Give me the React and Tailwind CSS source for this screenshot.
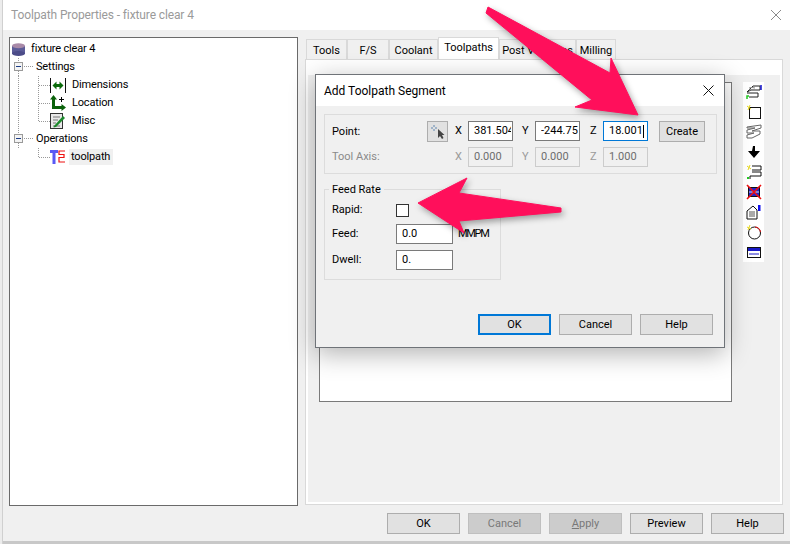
const FONT = "font-['Roboto','Noto_Sans',sans-serif]";

function Cylinder() {
  return (
    <svg width="13" height="13" viewBox="0 0 13 13" className="shrink-0">
      <rect x="0" y="3" width="13" height="8" fill="#5c5c98" />
      <ellipse cx="6.5" cy="10.5" rx="6.5" ry="2.5" fill="#4c4c88" />
      <ellipse cx="6.5" cy="2.7" rx="6.5" ry="2.5" fill="#a98aa8" />
    </svg>
  );
}
function DimIcon() {
  return (
    <svg width="16" height="15" viewBox="0 0 16 15" className="shrink-0">
      <path d="M0.5 0V15M15.5 0V15" stroke="#111" />
      <path d="M2.5 7.5L6.5 3.5V6H9.5V3.5L13.5 7.5L9.5 11.5V9H6.5V11.5Z" fill="#0b6b0b" />
    </svg>
  );
}
function LocIcon() {
  return (
    <svg width="16" height="16" viewBox="0 0 16 16" className="shrink-0">
      <path d="M3.5 0L0 4.5H2V14H11.5V16L16 12.5L11.5 9V11H5V4.5H7L3.5 0Z" fill="#0b620b" />
      <path d="M9 4.5H14M11.5 2V7" stroke="#000" />
    </svg>
  );
}
function MiscIcon() {
  return (
    <svg width="15" height="16" viewBox="0 0 15 16" className="shrink-0">
      <rect x="0.5" y="0.5" width="12" height="15" fill="#e8e8e8" stroke="#333" />
      <path d="M3 4H10M3 7H8M3 10H6M3 13H10" stroke="#777" />
      <path d="M4 13L13 3L15 5L6 14L3.5 14.5Z" fill="#1d8a2d" />
    </svg>
  );
}
function PathIcon() {
  return (
    <svg width="16" height="15" viewBox="0 0 16 15" className="shrink-0">
      <path d="M0 0H8V3H5.5V14H2.5V3H0Z" fill="#5959f5" />
      <path d="M15 1H9V4.5H14V7.5H9V12H15" fill="none" stroke="#ee1111" strokeWidth="1.2" />
    </svg>
  );
}

function Expander() {
  return (
    <svg width="22" height="18" viewBox="0 0 22 18" className="shrink-0">
      <path d="M4.5 0V4M4.5 13V18" stroke="#999" strokeDasharray="1 1" />
      <rect x="0.5" y="4.5" width="8" height="8" fill="#f4f4f4" stroke="#9a9a9a" />
      <path d="M2 8.5H7" stroke="#1c3d87" />
      <path d="M10 8.5H20" stroke="#999" strokeDasharray="1 1" />
    </svg>
  );
}
function Branch({ last, trunk }) {
  return (
    <svg width="36" height="18" viewBox="0 0 36 18" className="shrink-0">
      {trunk && <path d="M4.5 0V18" stroke="#999" strokeDasharray="1 1" />}
      <path d={last ? "M24.5 0V9" : "M24.5 0V18"} stroke="#999" strokeDasharray="1 1" />
      <path d="M25 9.5H36" stroke="#999" strokeDasharray="1 1" />
    </svg>
  );
}

function Parent({ label }) {
  return (
    <div className="flex h-[18px] items-center">
      <Expander />
      <span className="text-black">{label}</span>
    </div>
  );
}
function Leaf({ icon, label, last, trunk, selected }) {
  return (
    <div className="flex h-[18px] items-center">
      <Branch last={last} trunk={trunk} />
      <span className="flex w-[19px] shrink-0 justify-start">{icon}</span>
      <span className={selected ? "bg-[#f0f0f0] pl-[2px] pr-[3px] h-[16px] leading-[16px]" : "h-[16px] leading-[16px] ml-[3px]"}>{label}</span>
    </div>
  );
}

function Tab({ label, w, active }) {
  return (
    <div
      style={{ width: w }}
      className={
        active
          ? "h-[22px] border border-b-0 border-[#d9d9d9] bg-white text-center leading-[20px] text-black"
          : "mt-[2px] h-[20px] border border-b-0 border-[#d9d9d9] bg-[#f0f0f0] text-center leading-[22px] text-black"
      }
    >
      {label}
    </div>
  );
}

function ToolIcon({ children }) {
  return (
    <div className="flex h-[20px] items-center justify-center">
      <svg width="16" height="16" viewBox="0 0 16 16">{children}</svg>
    </div>
  );
}

function Toolbar() {
  return (
    <div className="w-[21px] h-[180px] bg-white shrink-0">
      <ToolIcon>
        <path d="M1 8L7 2H14V6H5L1 8ZM1 9H12V13H3" fill="none" stroke="#222" />
        <path d="M3 4L9 3M3 6L9 5" stroke="#888" />
        <path d="M15 1V6" stroke="#1111cc" strokeWidth="1.5" />
        <path d="M1 15V12H3" stroke="#22cc22" strokeWidth="1.5" fill="none" />
      </ToolIcon>
      <ToolIcon>
        <rect x="3.5" y="3.5" width="11" height="11" fill="none" stroke="#111" />
        <path d="M1 2L5 5M4 1L2 6" stroke="#e8d820" />
      </ToolIcon>
      <ToolIcon>
        <path d="M1 3L15 1V4L6 7H14V10L6 14H1V11L8 9H1V6L9 4H1Z" fill="#fff" stroke="#666" />
      </ToolIcon>
      <ToolIcon>
        <path d="M9 2V7H14L8 14L2 7H6L7 2Z" fill="#000" />
      </ToolIcon>
      <ToolIcon>
        <path d="M6 2H15V6H6M6 8H15V12H4V15" fill="none" stroke="#111" />
        <path d="M1 2L5 5M4 1L2 6" stroke="#e8d820" />
        <path d="M2 15V13" stroke="#22cc22" strokeWidth="2" />
      </ToolIcon>
      <ToolIcon>
        <rect x="2.5" y="3.5" width="11" height="9" fill="#2222cc" stroke="#111" />
        <path d="M3 8H13" stroke="#ddd" />
        <path d="M1 1L15 15M15 1L1 15" stroke="#ee1111" strokeWidth="1.6" />
      </ToolIcon>
      <ToolIcon>
        <path d="M1 7L7 2L11 6V15H1Z" fill="#fff" stroke="#111" />
        <path d="M3 8H9M3 10H9M3 12H9" stroke="#555" />
        <rect x="12" y="1" width="2.5" height="6" fill="#1111ee" />
      </ToolIcon>
      <ToolIcon>
        <circle cx="8.5" cy="9" r="6" fill="none" stroke="#111" />
        <path d="M9 3A6 6 0 0 1 14.5 8" fill="none" stroke="#ee1111" />
        <path d="M1 3L5 5M4 1L2 6" stroke="#e8d820" />
      </ToolIcon>
      <ToolIcon>
        <rect x="1.5" y="3.5" width="13" height="10" fill="#fff" stroke="#111" />
        <rect x="2" y="4" width="12" height="3" fill="#1a1ac8" />
        <path d="M3 10H13" stroke="#1a1ac8" />
      </ToolIcon>
    </div>
  );
}

function Btn({ label, disabled, focused, w = "w-[73px]" }) {
  let cls = "border-[#adadad] bg-[#e1e1e1] text-black";
  if (disabled) cls = "border-[#bfbfbf] bg-[#cccccc] text-[#787878]";
  if (focused) cls = "border-[#0078d7] border-2 bg-[#e1e1e1] text-black";
  return (
    <div className={`${w} h-[21px] shrink-0 flex items-center justify-center border pt-[2px] ${cls}`}>{label}</div>
  );
}

function Field({ value, focused, disabled, w = "w-[45px]", caret }) {
  let cls = "border-[#7a7a7a] bg-white text-black";
  if (focused) cls = "border-[#0078d7] bg-white text-black";
  if (disabled) cls = "border-[#cccccc] bg-[#f0f0f0] text-[#6d6d6d]";
  return (
    <div className={`${w} h-[20px] shrink-0 border ${cls} pl-[5px] pr-[1px]`}>
      <div className="h-full overflow-hidden whitespace-nowrap flex items-center pt-[1px]">
        <span className="shrink-0">{value}</span>
        {caret && <span className="inline-block h-[13px] w-px bg-black" />}
      </div>
    </div>
  );
}

function CoordRow({ vals, disabled, focusedIdx }) {
  const axes = ["X", "Y", "Z"];
  return (
    <>
      {axes.map((a, i) => (
        <div key={a} className={i === 0 ? "flex items-center shrink-0" : i === 1 ? "flex items-center shrink-0 ml-[9px]" : "flex items-center shrink-0 ml-[10px]"}>
          <span className={`w-[13px] pt-[1px] ${disabled ? "text-[#9a9a9a]" : "text-black"}`}>{a}</span>
          <Field value={vals[i]} disabled={disabled} focused={focusedIdx === i} caret={focusedIdx === i} />
        </div>
      ))}
    </>
  );
}

function Dialog() {
  return (
    <div className="absolute left-[315px] top-[74px] w-[410px] h-[274px] border border-[#6f7378] bg-[#f0f0f0] shadow-[0_6px_24px_rgba(0,0,0,0.3)] flex flex-col">
      <div className="h-[31px] bg-white flex items-center justify-between pl-[8px] pr-[10px] shrink-0">
        <span className="text-[12px] text-black">Add Toolpath Segment</span>
        <svg width="11" height="11" viewBox="0 0 11 11"><path d="M0.5 0.5L10.5 10.5M10.5 0.5L0.5 10.5" stroke="#111" /></svg>
      </div>
      <div className="pl-[8px] pr-[7px] pt-[8px] flex-1 flex flex-col">
        <div className="h-[60px] w-[393px] border border-[#dcdcdc] pl-[7px] pt-[6px] flex flex-col gap-[6px]">
          <div className="flex h-[20px] items-center">
            <span className="w-[95px] shrink-0 pt-[2px] text-black">Point:</span>
            <div className="w-[21px] h-[21px] border border-[#adadad] bg-[#e1e1e1] flex items-center justify-center shrink-0 mr-[7px]">
              <svg width="17" height="17" viewBox="0 0 17 17">
                <path d="M5 2V4M5 6V8M2 5H4M6 5H8" stroke="#5f86b0" />
                <path d="M9 6V15L11 13L13 16L14.5 15L13 12H15.5Z" fill="#444" />
              </svg>
            </div>
            <CoordRow vals={["381.504", "-244.75", "18.001"]} focusedIdx={2} />
            <div className="ml-[11px]"><Btn label="Create" w="w-[46px]" /></div>
          </div>
          <div className="flex h-[20px] items-center">
            <span className="w-[123px] shrink-0 text-[#8a8a8a]">Tool Axis:</span>
            <CoordRow vals={["0.000", "0.000", "1.000"]} disabled />
          </div>
        </div>
        <div className="relative mt-[15px] h-[91px] w-[177px] border border-[#dcdcdc] pl-[7px] pt-[11px]">
          <span className="absolute left-[4px] -top-[8px] bg-[#f0f0f0] px-[3px] text-black">Feed Rate</span>
          <div className="flex h-[18px] items-center">
            <span className="w-[64px] pt-[1px] text-black">Rapid:</span>
            <div className="w-[13px] h-[13px] border border-[#333] bg-white" />
          </div>
          <div className="flex h-[20px] items-center mt-[5px]">
            <span className="w-[64px] pt-[1px] text-black">Feed:</span>
            <Field value="0.0" w="w-[57px]" />
            <span className="ml-[5px] pt-[1px] tracking-[-1.3px] text-black">MMPM</span>
          </div>
          <div className="flex h-[20px] items-center mt-[6px]">
            <span className="w-[64px] pt-[1px] text-black">Dwell:</span>
            <Field value="0." w="w-[57px]" />
          </div>
        </div>
        <div className="mt-[34px] pr-[4px] flex justify-end gap-[8px]">
          <Btn label="OK" focused />
          <Btn label="Cancel" />
          <Btn label="Help" />
        </div>
      </div>
    </div>
  );
}

function Arrows() {
  return (
    <svg width="790" height="544" viewBox="0 0 790 544" className="absolute left-0 top-0 pointer-events-none drop-shadow-[2px_3px_3px_rgba(0,0,0,0.35)]">
      <path d="M488 7L610 73L611 58L638 115L575 107L592 100L486 13Z" fill="#ff0f5b" stroke="#ff0f5b" strokeLinejoin="round" />
      <path d="M418 203L467 178L459 193L561 208V212L459 221L464 233Z" fill="#ff0f5b" stroke="#ff0f5b" strokeLinejoin="round" />
    </svg>
  );
}

export default function App() {
  return (
    <div className={`${FONT} relative w-[790px] h-[544px] overflow-hidden bg-[#f0f0f0] text-[11px] flex`}>
      <div className="w-[3px] shrink-0 bg-[#ececec] border-r border-[#d0d0d0]" />
      <div className="flex-1 flex flex-col border-b-[3px] border-[#c8c8c8]">
        <div className="h-[30px] bg-white shrink-0 flex items-center justify-between pl-[8px] pr-[9px]">
          <span className="text-[12px] tracking-[-0.01em] text-[#9a9a9a]">Toolpath Properties - fixture clear 4</span>
          <svg width="10" height="10" viewBox="0 0 10 10"><path d="M0 0L10 10M10 0L0 10" stroke="#8a8a8a" /></svg>
        </div>
        <div className="flex-1 flex pl-[6px] pt-[7px] gap-[7px] min-h-0">
          <div className="w-[289px] h-[469px] border border-[#6a6a6a] bg-white pt-[2px] pl-[4px] tracking-[-0.015em] text-black">
            <div className="flex h-[18px] items-center gap-[6px] -ml-[2px]">
              <Cylinder />
              <span>fixture clear 4</span>
            </div>
            <Parent label="Settings" />
            <Leaf icon={<DimIcon />} label="Dimensions" trunk />
            <Leaf icon={<LocIcon />} label="Location" trunk />
            <Leaf icon={<MiscIcon />} label="Misc" trunk last />
            <Parent label="Operations" />
            <Leaf icon={<PathIcon />} label="toolpath" last selected />
          </div>
          <div className="flex-1 flex flex-col">
            <div className="flex h-[22px] pl-[1px] shrink-0">
              <Tab label="Tools" w={41} />
              <Tab label="F/S" w={42} />
              <Tab label="Coolant" w={49} />
              <Tab label="Toolpaths" w={61} active />
              <Tab label="Post Variables" w={77} />
              <Tab label="Milling" w={40} />
            </div>
            <div className="w-[478px] h-[446px] border border-[#d9d9d9] bg-white pt-[15px] px-[2px] pb-[2px]">
              <div className="h-full bg-[#f0f0f0] flex pl-[11px] pt-[7px] gap-[11px]">
                <div className="w-[413px] h-[320px] border border-[#7a7a7a] bg-white shrink-0" />
                <Toolbar />
              </div>
            </div>
          </div>
        </div>
        <div className="h-[36px] shrink-0 pt-[8px] pr-[6px] flex justify-end gap-[8px]">
          <Btn label="OK" />
          <Btn label="Cancel" disabled />
          <Btn label={<span><span className="underline">A</span>pply</span>} disabled />
          <Btn label="Preview" />
          <Btn label="Help" />
        </div>
      </div>
      <Dialog />
      <Arrows />
    </div>
  );
}
